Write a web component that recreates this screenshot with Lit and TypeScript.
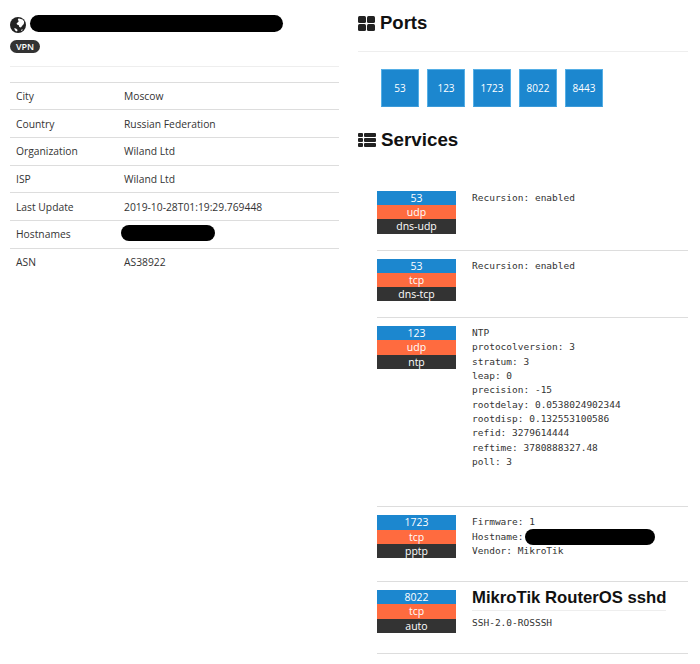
import { LitElement, css, html, nothing } from "lit";
import { customElement } from "lit/decorators.js";

type Service = {
  port: number;
  proto: string;
  name: string;
  banner?: unknown;
  title?: string;
};

const FACTS: [string, unknown][] = [
  ["City", "Moscow"],
  ["Country", "Russian Federation"],
  ["Organization", "Wiland Ltd"],
  ["ISP", "Wiland Ltd"],
  ["Last Update", "2019-10-28T01:19:29.769448"],
  ["Hostnames", html`<span class="blob host"></span>`],
  ["ASN", "AS38922"],
];

const PORTS = [53, 123, 1723, 8022, 8443];

const SERVICES: Service[] = [
  { port: 53, proto: "udp", name: "dns-udp", banner: "Recursion: enabled" },
  { port: 53, proto: "tcp", name: "dns-tcp", banner: "Recursion: enabled" },
  {
    port: 123,
    proto: "udp",
    name: "ntp",
    banner: `NTP
protocolversion: 3
stratum: 3
leap: 0
precision: -15
rootdelay: 0.0538024902344
rootdisp: 0.132553100586
refid: 3279614444
reftime: 3780888327.48
poll: 3

`,
  },
  {
    port: 1723,
    proto: "tcp",
    name: "pptp",
    banner: html`Firmware: 1
Hostname:<span class="blob pptp-host"></span>
Vendor: MikroTik`,
  },
  { port: 8022, proto: "tcp", name: "auto", title: "MikroTik RouterOS sshd", banner: "SSH-2.0-ROSSSH" },
];

@customElement("app-root")
export class AppRoot extends LitElement {
  static styles = css`
    :host {
      display: block;
      width: 700px;
      height: 664px;
      overflow: hidden;
      background: #fff;
      color: #333;
      font-family: "Open Sans", sans-serif;
      font-size: 10.3px;
    }

    .page {
      display: grid;
      grid-template-columns: 329px 330px;
      column-gap: 19px;
      padding-left: 10px;
    }

    .blob {
      display: inline-block;
      background: #000;
      border-radius: 9px;
    }

    .host-title {
      display: flex;
      align-items: center;
      gap: 4px;
      height: 18px;
      margin-top: 14px;
    }

    .host-title .blob {
      width: 253px;
      height: 17px;
    }

    .globe {
      width: 16px;
      height: 16px;
      margin-top: 3px;
    }

    .tag {
      display: block;
      width: 30px;
      height: 13px;
      margin-top: 8px;
      border-radius: 7px;
      background: #333;
      color: #fff;
      font-size: 9px;
      font-weight: 600;
      line-height: 13px;
      text-align: center;
    }

    .rule {
      height: 1px;
      margin: 13px 0 14.5px;
      background: #eee;
    }

    .facts {
      border-top: 1px solid #ddd;
    }

    .fact {
      display: grid;
      grid-template-columns: 108px 1fr;
      align-items: center;
      height: 26.7px;
      padding-left: 6px;
      border-bottom: 1px solid #ddd;
    }

    .fact:last-child {
      border-bottom: 0;
    }

    .host {
      width: 94px;
      height: 16px;
      margin: 0 0 2px -3px;
      vertical-align: middle;
    }

    h2 {
      display: flex;
      align-items: center;
      gap: 5px;
      margin: 0;
      color: #111;
      font-family: "Liberation Sans", Arial, sans-serif;
      font-weight: 700;
      line-height: 24px;
    }

    .ports-title {
      margin-top: 11px;
      font-size: 18.5px;
    }

    .services-title {
      margin-top: 21px;
      font-size: 18.8px;
    }

    h2 svg {
      flex: none;
    }

    .right .rule {
      margin: 16px 0 17px;
    }

    .ports {
      display: flex;
      gap: 8px;
      padding-left: 23px;
    }

    .port {
      box-sizing: border-box;
      width: 38px;
      height: 38px;
      border: 1px solid #55afe6;
      border-bottom-color: #3c9ad8;
      background: #1c87cf;
      color: #fff;
      font-size: 10px;
      line-height: 36px;
      text-align: center;
    }

    .services {
      margin-top: 31px;
      padding-left: 19px;
    }

    .service {
      display: flex;
      align-items: flex-start;
      gap: 16px;
      padding: 8px 0 16px;
      border-bottom: 1px solid #ddd;
    }

    .stack {
      flex: none;
      width: 79px;
      color: #fff;
      font-size: 10.5px;
      text-align: center;
    }

    .stack div {
      height: 14.2px;
      line-height: 14.2px;
    }

    .stack .num {
      background: #1c87cf;
    }

    .stack .proto {
      background: #ff6b3f;
    }

    .stack .name {
      background: #333;
    }

    pre {
      margin: 0 0 7px;
      color: #333;
      font-family: "DejaVu Sans Mono", monospace;
      font-size: 9.5px;
      line-height: 14.3px;
    }

    .pptp-host {
      width: 130px;
      height: 16px;
      margin: -4px 0 -4px 2px;
      vertical-align: middle;
    }

    .banner-title {
      width: 194px;
      height: 20px;
      margin-bottom: 4.7px;
      border-bottom: 1px solid #eee;
      color: #111;
      font-family: "Liberation Sans", Arial, sans-serif;
      font-size: 16.7px;
      font-weight: 700;
      line-height: 15px;
      white-space: nowrap;
    }
  `;

  private renderService(service: Service) {
    return html`
      <div class="service">
        <div class="stack">
          <div class="num">${service.port}</div>
          <div class="proto">${service.proto}</div>
          <div class="name">${service.name}</div>
        </div>
        <div>
          ${service.title ? html`<div class="banner-title">${service.title}</div>` : nothing}
          <pre>${service.banner}</pre>
        </div>
      </div>
    `;
  }

  render() {
    return html`
      <div class="page">
        <section>
          <div class="host-title">
            <svg class="globe" viewBox="0 0 16 16" aria-hidden="true">
              <circle cx="8" cy="8" r="8" fill="#222" />
              <path
                fill="#fff"
                d="M9 1.4l3.6 1 1.6 2.2-.4 2.4-1.4 1.4-1.5 2-1.6-.4-.5-1.8-1.8-.6-.4-1.4 1.4-1 .8-1.2-1-.9.6-1.7zM4 11.2l2 .3 1.6 1.5-.6 1.6-1.6-.8-1.4-2.6zM11 13l1.4-.8.3.8-1.3.9-.4-.9z"
              />
            </svg>
            <span class="blob"></span>
          </div>
          <span class="tag">VPN</span>
          <div class="rule"></div>
          <div class="facts">
            ${FACTS.map(
              ([label, value]) => html`
                <div class="fact">
                  <span>${label}</span>
                  <span>${value}</span>
                </div>
              `
            )}
          </div>
        </section>

        <section class="right">
          <h2 class="ports-title">
            <svg width="17" height="15" viewBox="0 0 17 15" fill="#222" aria-hidden="true">
              <rect width="8" height="7" rx="1.5" />
              <rect x="9" width="8" height="7" rx="1.5" />
              <rect y="8" width="8" height="7" rx="1.5" />
              <rect x="9" y="8" width="8" height="7" rx="1.5" />
            </svg>
            Ports
          </h2>
          <div class="rule"></div>
          <div class="ports">${PORTS.map((port) => html`<div class="port">${port}</div>`)}</div>
          <h2 class="services-title">
            <svg width="18" height="14" viewBox="0 0 18 14" fill="#222" aria-hidden="true">
              <rect width="5" height="4" rx="1" />
              <rect x="6" width="12" height="4" rx="1" />
              <rect y="5" width="5" height="4" rx="1" />
              <rect x="6" y="5" width="12" height="4" rx="1" />
              <rect y="10" width="5" height="4" rx="1" />
              <rect x="6" y="10" width="12" height="4" rx="1" />
            </svg>
            Services
          </h2>
          <div class="services">${SERVICES.map((service) => this.renderService(service))}</div>
        </section>
      </div>
    `;
  }
}
